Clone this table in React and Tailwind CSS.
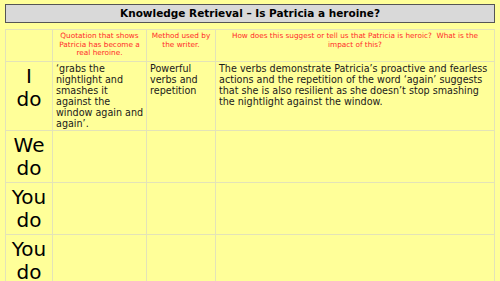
import React from 'react';

const rows = [
    { label: ['I', 'do'], quote: ['‘grabs the', 'nightlight and', 'smashes it', 'against the', 'window again and', 'again’.'], method: 'Powerful verbs and repetition', impact: 'The verbs demonstrate Patricia’s proactive and fearless actions and the repetition of the word ‘again’ suggests that she is also resilient as she doesn’t stop smashing the nightlight against the window.', h: 'h-[69px]' },
    { label: ['We', 'do'], h: 'h-[52px]' },
    { label: ['You', 'do'], h: 'h-[52px]' },
    { label: ['You', 'do'], h: 'h-[52px]' },
];

const App = () => {
    return (
        <div className="w-[500px] h-[281px] overflow-hidden bg-[#ffff99] font-['DejaVu_Sans',sans-serif] text-[#1a1a1a]">
            {/* Title */}
            <div className="pt-[4px] pl-[5px] pr-[5px]">
                <div className="h-[19px] bg-[#d9d9d9] border border-[#555] border-t-[1.5px] flex items-center justify-center text-[10.5px] font-bold text-black">
                    Knowledge Retrieval – Is Patricia a heroine?
                </div>
            </div>

            {/* Table */}
            <div className="pt-[6px] pl-[5px] pr-[5px]">
                <table className="w-[490px] border-collapse table-fixed">
                    <colgroup>
                        <col className="w-[47px]" />
                        <col className="w-[94px]" />
                        <col className="w-[69px]" />
                        <col />
                    </colgroup>
                    <thead>
                        <tr className="h-[32px] align-top text-[7.3px] leading-[8.5px] text-[#ff2a2a] text-center">
                            <th className="border border-[#e3e3b8] font-normal"></th>
                            <th className="border border-[#e3e3b8] font-normal pt-[2px] px-[2px]">Quotation that shows Patricia has become a real heroine.</th>
                            <th className="border border-[#e3e3b8] font-normal pt-[2px] px-[2px]">Method used by the writer.</th>
                            <th className="border border-[#e3e3b8] font-normal pt-[2px] px-[12px]">How does this suggest or tell us that Patricia is heroic?&nbsp; What is the impact of this?</th>
                        </tr>
                    </thead>
                    <tbody>
                        {rows.map((r, i) => (
                            <tr key={i} className={`${r.h} align-top`}>
                                <td className="border border-[#e3e3b8] text-center text-[20px] leading-[23.5px] text-black pt-[2.5px]">
                                    {r.label[0]}<br />{r.label[1]}
                                </td>
                                <td className="border border-[#e3e3b8] text-[9.6px] leading-[10.9px] pl-[3px] pr-0 pt-[2px] whitespace-nowrap">
                                    {r.quote && r.quote.map((line, j) => (
                                        <div key={j}>{line}</div>
                                    ))}
                                </td>
                                <td className="border border-[#e3e3b8] text-[9.6px] leading-[10.9px] px-[3px] pt-[2px]">{r.method}</td>
                                <td className="border border-[#e3e3b8] text-[9.6px] leading-[10.9px] px-[3px] pt-[2px]">{r.impact}</td>
                            </tr>
                        ))}
                    </tbody>
                </table>
            </div>
        </div>
    );
};

export default App;
